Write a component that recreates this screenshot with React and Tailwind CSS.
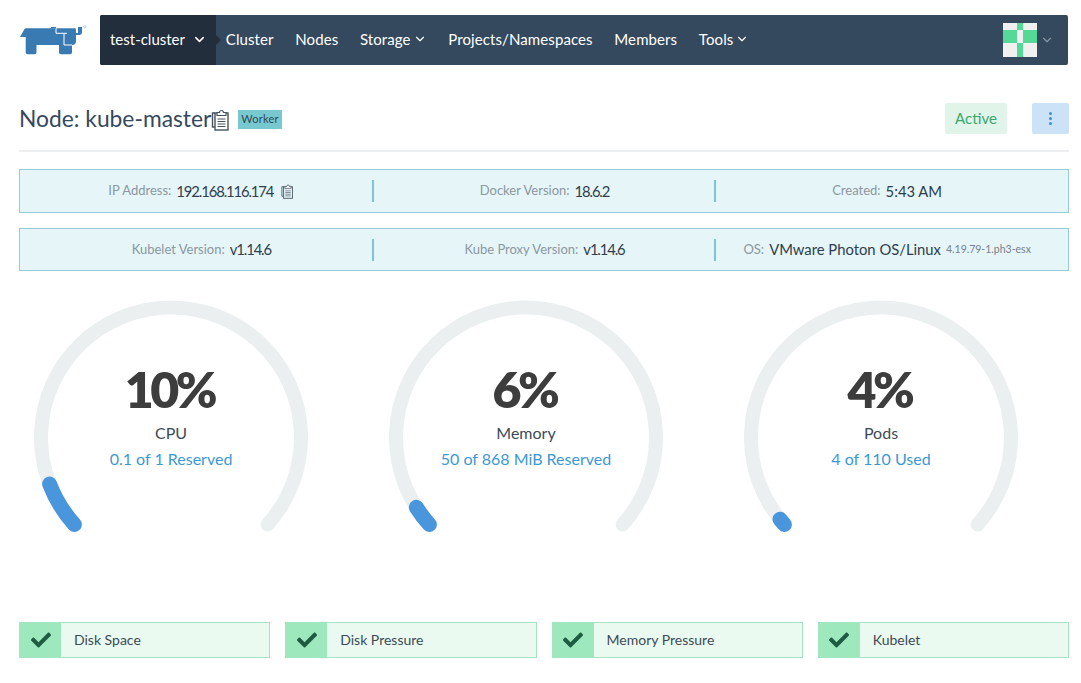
import { ChevronDown } from "lucide-react"
import { FaCheck } from "react-icons/fa"

const polar = (deg, r = 130) => {
  // 0deg = pointing left, positive goes clockwise over the top
  const a = (deg * Math.PI) / 180
  return [152 - r * Math.cos(a), 137.5 - r * Math.sin(a)]
}

const arc = (from, to) => {
  const [x1, y1] = polar(from)
  const [x2, y2] = polar(to)
  return `M ${x1} ${y1} A 130 130 0 ${to - from > 180 ? 1 : 0} 1 ${x2} ${y2}`
}

const ClipboardIcon = ({ className }) => (
  <svg viewBox="0 0 20 22" className={className} fill="none" stroke="currentColor">
    <path d="M5 4H2.5v14H5" strokeWidth="1.4" />
    <rect x="5" y="4" width="13" height="17" strokeWidth="1.4" />
    <path d="M7 3.5h2.5a2 2 0 0 1 4 0H16v3H7z" fill="#fff" strokeWidth="1.2" />
    <path d="M7.5 10h8M7.5 12.5h8M7.5 15h8M7.5 17.5h8" strokeWidth="1" />
  </svg>
)

const Logo = () => (
  <svg viewBox="0 0 68 30" className="w-[68px] h-[30px]" aria-hidden="true">
    <path
      fill="#3a7ab3"
      d="M1 12 L5.500 4 Q6 3.300 7 3.300 H56 Q57 3.300 57 5 V8 H59 V2 H63 V7 Q63 10 60 10 H57 V16 Q57 20 53 20 V27.500 Q53 29.300 51 29.300 H42 Q40 29.300 40 27.500 V20 H17.500 V27.500 Q17.500 29.300 15.500 29.300 H8.500 Q6.700 29.300 6.700 27.500 V12 Z"
    />
    <path d="M37 1 V8.300 H48 M45 8.300 V20 H53" fill="none" stroke="#fff" strokeWidth="1" />
    <path d="M32 2 H37 V3.500 H32 Z" fill="#3a7ab3" />
    <circle cx="65.800" cy="1.800" r="1.200" fill="none" stroke="#8fb4d3" strokeWidth="0.600" />
  </svg>
)

const avatar = [
  [0, 0, 1, 0, 0],
  [1, 1, 0, 1, 1],
  [1, 1, 0, 1, 1],
  [0, 0, 1, 0, 0],
  [0, 0, 1, 0, 0],
]

const Gauge = ({ value, title, sub, from, to }) => (
  <div className="relative w-[304px] h-[260px]">
    <svg width="304" height="260" viewBox="0 0 304 260" fill="none">
      <path d={arc(-42, 222)} stroke="#ebeff0" strokeWidth="14" strokeLinecap="round" />
      <path d={arc(from, to)} stroke="#4a96dc" strokeWidth="15" strokeLinecap="round" />
    </svg>
    <div className="absolute left-0 right-0 top-[57px] flex flex-col items-center">
      <div className="pr-[3px] text-[50px] leading-[64px] font-extrabold text-[#3d3d3d] tracking-[-3.500px]">{value}</div>
      <div className="text-[16px] leading-[24px] text-[#3d4a56]">{title}</div>
      <div className="text-[16px] leading-[24px] mt-[2px] text-[#3d98d3]">{sub}</div>
    </div>
  </div>
)

const Banner = ({ cells, height }) => (
  <div className={`grid grid-cols-3 items-center px-[10px] bg-[#e5f5f8] border border-[#95cdd6] text-[#3d4a56] ${height}`}>
    {cells.map((cell, i) => (
      <div
        key={i}
        className={`flex items-center justify-center gap-[5px] h-[22px] ${i > 0 ? "-ml-[1px] border-l-2 border-[#79c7d0]" : ""}`}
      >
        {cell}
      </div>
    ))}
  </div>
)

const Label = ({ children }) => <span className="text-[13px] text-[#8d979f]">{children}</span>

const Value = ({ children, tight }) => (
  <span className={`text-[14.800px] text-[#2f3d4c] ${tight ? "tracking-[-1.100px]" : ""}`}>{children}</span>
)

const NavItem = ({ children, caret }) => (
  <a className="flex items-center gap-[2px] px-[10.800px] pb-[2px] text-[15px] tracking-[0.1px] text-white">
    {children}
    {caret && <ChevronDown size={14} strokeWidth={2} />}
  </a>
)

export default function App() {
  return (
    <div
      className="w-[1081px] h-[683px] bg-white overflow-hidden px-[19px] pt-[15px]"
      style={{ fontFamily: '"Lato", "Noto Sans", sans-serif' }}
    >
      <header className="flex items-center h-[50px] w-[1049px]">
        <div className="w-[81px] shrink-0 -mt-[1px]">
          <Logo />
        </div>
        <nav className="flex-1 flex items-stretch h-full bg-[#35495e] rounded-[2px]">
          <div className="relative flex items-center justify-between w-[116px] mr-[-1px] pl-[10px] pr-[9px] pb-[2px] bg-[#222e3c] rounded-l-[2px] text-[15px] text-white">
            test-cluster
            <ChevronDown size={15} strokeWidth={2.400} />
            <span className="absolute left-full top-[20px] border-y-[5px] border-l-[5px] border-y-transparent border-l-[#222e3c]" />
          </div>
          <NavItem>Cluster</NavItem>
          <NavItem>Nodes</NavItem>
          <NavItem caret>Storage</NavItem>
          <NavItem>Projects/Namespaces</NavItem>
          <NavItem>Members</NavItem>
          <NavItem caret>Tools</NavItem>
          <div className="ml-auto flex items-center gap-[3px] pr-[14px]">
            <div className="grid grid-cols-5 w-[34px] h-[34px]">
              {avatar.flat().map((on, i) => (
                <span key={i} className={on ? "bg-[#55d996]" : "bg-[#f0f0f0]"} />
              ))}
            </div>
            <ChevronDown size={14} className="text-[#8796a5]" />
          </div>
        </nav>
      </header>

      <section className="flex items-center justify-between h-[50px] mt-[28px] w-[1050px]">
        <div className="flex items-center">
          <h1 className="text-[22.800px] text-[#35495e]">Node: kube-master</h1>
          <ClipboardIcon className="w-[20px] h-[22px] -ml-[1px] text-[#45535f] mt-[3px]" />
          <span className="ml-[8px] mt-[2px] h-[19px] px-[3px] flex items-center bg-[#78c9cf] text-[11px] tracking-[0.2px] text-[#2f4a55]">Worker</span>
        </div>
        <div className="flex items-center gap-[25px]">
          <div className="flex items-center justify-center w-[62px] h-[31px] rounded-[2px] bg-[#e1f4e9] text-[#3aa76d] text-[15px]">Active</div>
          <div className="flex flex-col items-center justify-center gap-[2px] w-[37px] h-[31px] rounded-[2px] bg-[#cce3f7]">
            <span className="w-[3px] h-[3px] rounded-full bg-[#3d8fd8]" />
            <span className="w-[3px] h-[3px] rounded-full bg-[#3d8fd8]" />
            <span className="w-[3px] h-[3px] rounded-full bg-[#3d8fd8]" />
          </div>
        </div>
      </section>
      <hr className="mt-[7px] w-[1050px] border-t-2 border-[#edeff0]" />

      <div className="flex flex-col gap-[15px] mt-[17px] w-[1050px]">
        <Banner
          height="h-[44px]"
          cells={[
            <>
              <Label>IP Address:</Label>
              <Value tight>192.168.116.174</Value>
              <ClipboardIcon className="w-[14px] h-[15px] ml-[2px] text-[#55626d]" />
            </>,
            <>
              <Label>Docker Version:</Label>
              <Value tight>18.6.2</Value>
            </>,
            <>
              <Label>Created:</Label>
              <Value>5:43 AM</Value>
            </>,
          ]}
        />
        <Banner
          height="h-[43px]"
          cells={[
            <>
              <Label>Kubelet Version:</Label>
              <Value tight>v1.14.6</Value>
            </>,
            <>
              <Label>Kube Proxy Version:</Label>
              <Value tight>v1.14.6</Value>
            </>,
            <>
              <Label>OS:</Label>
              <Value>VMware Photon OS/Linux</Value>
              <span className="text-[10.500px] text-[#75818b]">4.19.79-1.ph3-esx</span>
            </>,
          ]}
        />
      </div>

      <div className="flex mt-[29px] w-[1050px]">
        <div className="w-[355px]">
          <Gauge value="10%" title="CPU" sub="0.1 of 1 Reserved" from={-42} to={-21} />
        </div>
        <div className="w-[355px]">
          <Gauge value="6%" title="Memory" sub="50 of 868 MiB Reserved" from={-42} to={-32.5} />
        </div>
        <div className="w-[340px]">
          <Gauge value="4%" title="Pods" sub="4 of 110 Used" from={-42} to={-39} />
        </div>
      </div>

      <div className="grid grid-cols-4 gap-[15px] mt-[62px] w-[1050px]">
        {["Disk Space", "Disk Pressure", "Memory Pressure", "Kubelet"].map((name) => (
          <div key={name} className="flex items-center h-[36px] bg-[#eafaf1] border border-[#a4e4c1]">
            <div className="flex items-center justify-center w-[41px] h-full bg-[#9de8bd]">
              <FaCheck size={20} className="text-[#1e5c42]" />
            </div>
            <span className="ml-[13px] pb-[2px] text-[14px] text-[#3d4a56]">{name}</span>
          </div>
        ))}
      </div>
    </div>
  )
}
